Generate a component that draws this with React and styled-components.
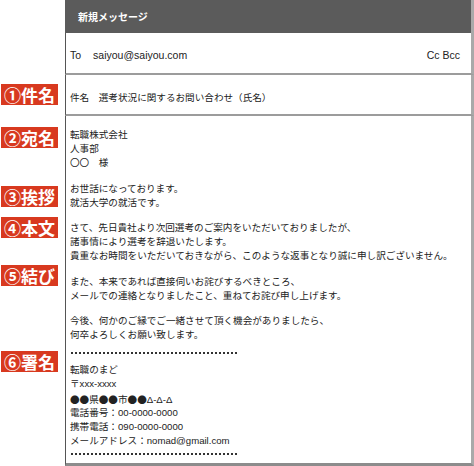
import React from "react";
import styled, { createGlobalStyle } from "styled-components";

const GlobalStyle = createGlobalStyle`
    *, *::before, *::after {
        box-sizing: border-box;
    }
    html, body {
        margin: 0;
        padding: 0;
        background: #ffffff;
    }
    body {
        font-family: "Liberation Sans", "Noto Sans CJK JP", sans-serif;
        color: #222222;
    }
`;

const Page = styled.div`
    width: 474px;
    height: 466px;
    display: flex;
    flex-direction: column;
    overflow: hidden;
`;

const Row = styled.div`
    display: grid;
    grid-template-columns: 65px 1fr;
    flex: ${(p) => (p.$grow ? 1 : "none")};
`;

const LabelCell = styled.div`
    display: flex;
    align-items: flex-start;
`;

const Tag = styled.span`
    margin: ${(p) => p.$offset}px 0 0 1px;
    padding: 0 3px;
    background: #d8391f;
    color: #ffffff;
    font-family: "Noto Sans CJK JP", sans-serif;
    font-weight: 700;
    font-size: 17px;
    line-height: 21px;
    white-space: nowrap;
`;

const Cell = styled.div`
    border-left: 1px solid #555555;
    border-right: 3px solid #a9a9a9;
`;

const HeaderBar = styled(Cell)`
    height: 33px;
    display: flex;
    align-items: center;
    padding-left: 12px;
    background: #5b5b5b;
    border-left-color: #5b5b5b;
    color: #ffffff;
    font-family: "Noto Sans CJK JP", sans-serif;
    font-weight: 700;
    font-size: 10px;
`;

const FieldRow = styled(Cell)`
    height: ${(p) => p.$height}px;
    display: flex;
    align-items: center;
    padding: 4px 11px 0 4px;
    border-bottom: 2px solid #9c9c9c;
    font-size: ${(p) => p.$size}px;
`;

const FieldName = styled.span`
    margin-right: ${(p) => p.$gap}px;
`;

const Spacer = styled.span`
    flex: 1;
`;

const BodyBlock = styled(Cell)`
    padding: ${(p) => p.$top}px 0 0 4px;
    font-size: 9.6px;
`;

const LastBlock = styled(BodyBlock)`
    border-bottom: 3px solid #8c8c8c;
`;

const Line = styled.div`
    height: 14.2px;
    line-height: 14.2px;
    white-space: nowrap;
`;

const Mark = styled.span`
    font-family: "Noto Sans CJK JP", sans-serif;
`;

const Dots = styled.div`
    width: 166px;
    height: 0;
    border-top: 2px dotted #333333;
    margin: ${(p) => p.$before}px 0 ${(p) => p.$after}px 1px;
`;

const sections = [
    {
        label: "②宛名",
        offset: 11,
        top: 12,
        lines: ["転職株式会社", "人事部", "〇〇　様"],
    },
    {
        label: "③挨拶",
        offset: 15,
        top: 11,
        lines: ["お世話になっております。", "就活大学の就活です。"],
    },
    {
        label: "④本文",
        offset: 7,
        top: 11,
        lines: [
            "さて、先日貴社より次回選考のご案内をいただいておりましたが、",
            "諸事情により選考を辞退いたします。",
            "貴重なお時間をいただいておきながら、このような返事となり誠に申し訳ございません。",
        ],
    },
    {
        label: "⑤結び",
        offset: 1,
        top: 11,
        lines: [
            "また、本来であれば直接伺いお詫びするべきところ、",
            "メールでの連絡となりましたこと、重ねてお詫び申し上げます。",
        ],
    },
    {
        label: null,
        offset: 0,
        top: 11,
        lines: [
            "今後、何かのご縁でご一緒させて頂く機会がありましたら、",
            "何卒よろしくお願い致します。",
        ],
    },
];

const signature = [
    "転職のまど",
    "〒xxx-xxxx",
    <>
        <Mark>●●県●●市●●</Mark>Δ-Δ-Δ
    </>,
    "電話番号：00-0000-0000",
    "携帯電話：090-0000-0000",
    "メールアドレス：nomad@gmail.com",
];

function App() {
    return (
        <Page>
            <GlobalStyle />
            <Row>
                <LabelCell />
                <HeaderBar>新規メッセージ</HeaderBar>
            </Row>
            <Row>
                <LabelCell />
                <FieldRow $height={42} $size={10.5}>
                    <FieldName $gap={12}>To</FieldName>
                    <span>saiyou@saiyou.com</span>
                    <Spacer />
                    <span>Cc Bcc</span>
                </FieldRow>
            </Row>
            <Row>
                <LabelCell>
                    <Tag $offset={9}>①件名</Tag>
                </LabelCell>
                <FieldRow $height={41} $size={9.6}>
                    <FieldName $gap={0}>件名　</FieldName>
                    <span>選考状況に関するお問い合わせ（氏名）</span>
                </FieldRow>
            </Row>
            {sections.map((s, i) => (
                <Row key={i}>
                    <LabelCell>
                        {s.label && <Tag $offset={s.offset}>{s.label}</Tag>}
                    </LabelCell>
                    <BodyBlock $top={s.top}>
                        {s.lines.map((l, j) => (
                            <Line key={j}>{l}</Line>
                        ))}
                    </BodyBlock>
                </Row>
            ))}
            <Row $grow>
                <LabelCell>
                    <Tag $offset={9}>⑥署名</Tag>
                </LabelCell>
                <LastBlock $top={10}>
                    <Dots $before={0} $after={9} />
                    {signature.map((l, j) => (
                        <Line key={j}>{l}</Line>
                    ))}
                    <Dots $before={5} $after={0} />
                </LastBlock>
            </Row>
        </Page>
    );
}

export default App;
